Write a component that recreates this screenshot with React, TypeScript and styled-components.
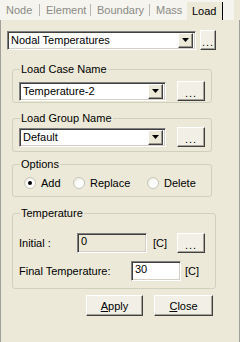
import { createGlobalStyle, styled } from 'styled-components';

const GlobalStyle = createGlobalStyle`
  html, body {
    margin: 0;
    padding: 0;
    background: #ece9d8;
  }
  body {
    width: 240px;
    height: 342px;
    overflow: hidden;
    font-family: Tahoma, "Liberation Sans", Arial, sans-serif;
    font-size: 11px;
    color: #000;
  }
`;

const Window = styled.div`
  display: flex;
  flex-direction: column;
  width: 240px;
  height: 342px;
  background: #ece9d8;
`;

const TabStrip = styled.div`
  display: flex;
  align-items: stretch;
  height: 20px;
  width: 234px;
  background: #f5f4ee;
`;

const Tab = styled.div<{ $active?: boolean; $w: number; $last?: boolean }>`
  display: flex;
  align-items: center;
  box-sizing: border-box;
  width: ${(p) => p.$w}px;
  flex-shrink: 0;
  padding-left: ${(p) => (p.$active ? 5 : 6)}px;
  color: ${(p) => (p.$active ? '#000' : '#8a8a85')};
  background: ${(p) => (p.$active ? '#ece9d8' : 'transparent')};
  border-right: 1px solid
    ${(p) => (p.$active ? '#000' : p.$last ? 'transparent' : '#b8b8b0')};
  margin: ${(p) => (p.$active ? '2px 0 0' : '4px 0')};
  white-space: nowrap;
`;

const Panel = styled.div`
  flex: 1;
  width: 232px;
  display: flex;
  flex-direction: column;
  border-left: 1px solid #a0a09a;
  border-right: 1px solid #a0a09a;
  padding: 10px 0 0 6px;
`;

const Row = styled.div`
  display: flex;
  align-items: center;
  gap: 4px;
`;

const Combo = styled.div<{ $w: number }>`
  display: flex;
  align-items: center;
  width: ${(p) => p.$w}px;
  height: 19px;
  box-sizing: border-box;
  background: #fff;
  border: 1px solid;
  border-color: #808080 #fff #fff #808080;
  box-shadow: inset 1px 1px 0 #404040, inset -1px -1px 0 #d4d0c8;
  padding: 2px;
`;

const ComboText = styled.div`
  flex: 1;
  padding-left: 1px;
  line-height: 13px;
`;

const ComboArrow = styled.div`
  width: 15px;
  height: 15px;
  box-sizing: border-box;
  background: #ece9d8;
  border: 1px solid;
  border-color: #fff #404040 #404040 #fff;
  box-shadow: inset -1px -1px 0 #9d9b8f;
  display: flex;
  align-items: center;
  justify-content: center;
`;

const Button = styled.button<{ $w: number; $h?: number }>`
  width: ${(p) => p.$w}px;
  height: ${(p) => p.$h ?? 20}px;
  flex-shrink: 0;
  box-sizing: border-box;
  padding: 0;
  margin: 0;
  font: inherit;
  color: #000;
  background: #f1efe6;
  border: 1px solid;
  border-color: #fff #404040 #404040 #fff;
  box-shadow: inset -1px -1px 0 #a6a496;
  display: flex;
  align-items: center;
  justify-content: center;
`;

const Dots = styled.span`
  letter-spacing: 1px;
  position: relative;
  top: 2px;
`;

const Group = styled.fieldset<{ $h: number }>`
  margin: 0;
  width: 200px;
  height: ${(p) => p.$h}px;
  box-sizing: border-box;
  border: 1px solid #d0d0bf;
  border-radius: 3px;
  padding: 0 6px;
  margin-left: 5px;
  display: flex;
  flex-direction: column;
`;

const Legend = styled.legend`
  padding: 0 1px;
  margin-left: 1px;
  line-height: 13px;
`;

const RadioRow = styled.div`
  display: flex;
  align-items: center;
  padding: 6px 0 0 5px;
`;

const RadioItem = styled.label<{ $w: number }>`
  display: flex;
  align-items: center;
  flex-shrink: 0;
  gap: 5px;
  width: ${(p) => p.$w}px;
`;

const RadioDot = styled.span<{ $on?: boolean }>`
  width: 12px;
  height: 12px;
  box-sizing: border-box;
  border-radius: 50%;
  border: 1px solid #c8c6b8;
  background: radial-gradient(circle at 65% 65%, #fff 40%, #e2e0d4 100%);
  display: flex;
  align-items: center;
  justify-content: center;
  &::after {
    content: '';
    width: 4px;
    height: 4px;
    border-radius: 50%;
    background: ${(p) => (p.$on ? '#000' : 'transparent')};
  }
`;

const FieldRow = styled.div`
  display: flex;
  align-items: center;
`;

const FieldLabel = styled.div<{ $w: number }>`
  width: ${(p) => p.$w}px;
  flex-shrink: 0;
`;

const TextBox = styled.div<{ $w: number; $disabled?: boolean }>`
  width: ${(p) => p.$w}px;
  height: 20px;
  flex-shrink: 0;
  box-sizing: border-box;
  background: ${(p) => (p.$disabled ? '#ece9d8' : '#fff')};
  border: 1px solid;
  border-color: #808080 #fff #fff #808080;
  box-shadow: inset 1px 1px 0 #404040, inset -1px -1px 0 #d4d0c8;
  padding: 1px 0 0 3px;
  line-height: 13px;
`;

const Unit = styled.div<{ $gap: number }>`
  margin-left: ${(p) => p.$gap}px;
  width: 24px;
  flex-shrink: 0;
`;

const Footer = styled.div`
  display: flex;
  gap: 11px;
  padding-left: 79px;
  margin-top: 6px;
`;

const Arrow = () => (
  <svg width="7" height="4" viewBox="0 0 7 4">
    <path d="M0 0h7L3.5 4z" fill="#000" />
  </svg>
);

export default function App() {
  return (
    <Window>
      <GlobalStyle />
      <TabStrip>
        <Tab $w={40}>Node</Tab>
        <Tab $w={51}>Element</Tab>
        <Tab $w={59}>Boundary</Tab>
        <Tab $w={37} $last>
          Mass
        </Tab>
        <Tab $w={36} $active>
          Load
        </Tab>
      </TabStrip>
      <Panel>
        <Row>
          <Combo $w={189}>
            <ComboText>Nodal Temperatures</ComboText>
            <ComboArrow>
              <Arrow />
            </ComboArrow>
          </Combo>
          <Button $w={16}>
            <Dots>...</Dots>
          </Button>
        </Row>

        <Group $h={40} style={{ marginTop: 13 }}>
          <Legend>Load Case Name</Legend>
          <Row style={{ gap: 11, marginTop: 5 }}>
            <Combo $w={147}>
              <ComboText>Temperature-2</ComboText>
              <ComboArrow>
                <Arrow />
              </ComboArrow>
            </Combo>
            <Button $w={28}>
              <Dots>...</Dots>
            </Button>
          </Row>
        </Group>

        <Group $h={40} style={{ marginTop: 9 }}>
          <Legend>Load Group Name</Legend>
          <Row style={{ gap: 11, marginTop: 2 }}>
            <Combo $w={147}>
              <ComboText>Default</ComboText>
              <ComboArrow>
                <Arrow />
              </ComboArrow>
            </Combo>
            <Button $w={28}>
              <Dots>...</Dots>
            </Button>
          </Row>
        </Group>

        <Group $h={39} style={{ marginTop: 6 }}>
          <Legend>Options</Legend>
          <RadioRow>
            <RadioItem $w={49}>
              <RadioDot $on />
              Add
            </RadioItem>
            <RadioItem $w={74}>
              <RadioDot />
              Replace
            </RadioItem>
            <RadioItem $w={56}>
              <RadioDot />
              Delete
            </RadioItem>
          </RadioRow>
        </Group>

        <Group $h={82} style={{ marginTop: 10 }}>
          <Legend>Temperature</Legend>
          <FieldRow style={{ marginTop: 13 }}>
            <FieldLabel $w={58}>Initial :</FieldLabel>
            <TextBox $w={70} $disabled>
              0
            </TextBox>
            <Unit $gap={6}>[C]</Unit>
            <Button $w={28}>
              <Dots>...</Dots>
            </Button>
          </FieldRow>
          <FieldRow style={{ marginTop: 8 }}>
            <FieldLabel $w={112}>Final Temperature:</FieldLabel>
            <TextBox $w={50}>30</TextBox>
            <Unit $gap={4}>[C]</Unit>
          </FieldRow>
        </Group>

        <Footer>
          <Button $w={57} $h={21}>
            <span>
              <u>A</u>pply
            </span>
          </Button>
          <Button $w={59} $h={21}>
            <span>
              <u>C</u>lose
            </span>
          </Button>
        </Footer>
      </Panel>
    </Window>
  );
}
